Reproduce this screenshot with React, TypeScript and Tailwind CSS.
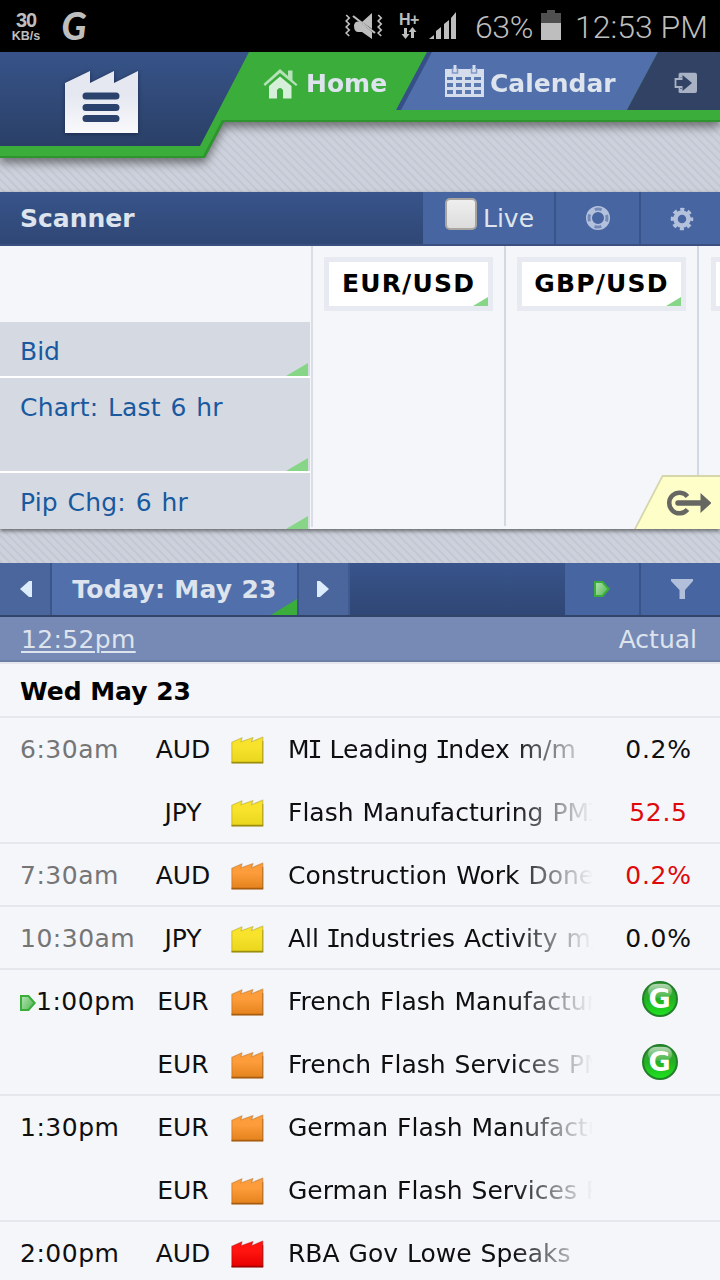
import clsx from 'clsx';

type Impact = 'low' | 'medium' | 'high';

interface CalendarEvent {
  time?: string;
  currency: string;
  impact: Impact;
  title: string;
  actual?: string;
  worse?: boolean;
  graph?: boolean;
  past?: boolean;
  next?: boolean;
  last?: boolean;
}

const EVENTS: CalendarEvent[] = [
  { time: '6:30am', currency: 'AUD', impact: 'low', title: 'MI Leading Index m/m', actual: '0.2%', past: true },
  { currency: 'JPY', impact: 'low', title: 'Flash Manufacturing PMI', actual: '52.5', worse: true, last: true },
  { time: '7:30am', currency: 'AUD', impact: 'medium', title: 'Construction Work Done', actual: '0.2%', worse: true, past: true, last: true },
  { time: '10:30am', currency: 'JPY', impact: 'low', title: 'All Industries Activity m/m', actual: '0.0%', past: true, last: true },
  { time: '1:00pm', currency: 'EUR', impact: 'medium', title: 'French Flash Manufacturing PMI', graph: true, next: true },
  { currency: 'EUR', impact: 'medium', title: 'French Flash Services PMI', graph: true, last: true },
  { time: '1:30pm', currency: 'EUR', impact: 'medium', title: 'German Flash Manufacturing PMI' },
  { currency: 'EUR', impact: 'medium', title: 'German Flash Services PMI', last: true },
  { time: '2:00pm', currency: 'AUD', impact: 'high', title: 'RBA Gov Lowe Speaks' },
];

const IMPACT_COLORS: Record<Impact, [string, string, string]> = {
  low: ['#f8e22c', '#e9d61c', '#9c8e0c'],
  medium: ['#fc9c3a', '#e4831c', '#a85c10'],
  high: ['#ff1410', '#e60000', '#a00000'],
};

function ImpactIcon({ impact }: { impact: Impact }) {
  const [top, bottom, edge] = IMPACT_COLORS[impact];
  return (
    <svg width="33" height="28" viewBox="0 0 33 28">
      <defs>
        <linearGradient id={`impact-${impact}`} x1="0" y1="0" x2="0" y2="1">
          <stop offset="0.4" stopColor={top} />
          <stop offset="1" stopColor={bottom} />
        </linearGradient>
      </defs>
      <path
        d="M.8 6.200 11 1.800l-1 4L22 1.500l-1.500 4.300L31.800 1v25.600H.8z"
        fill={`url(#impact-${impact})`}
        stroke={edge}
        strokeOpacity="0.4"
        strokeWidth="1.2"
        strokeLinejoin="round"
      />
      <path d="M.5 26.600h31.800" stroke={edge} strokeWidth="1.8" />
      <path d="M31.800 5v21" stroke={edge} strokeWidth="1.2" strokeOpacity="0.6" />
    </svg>
  );
}

function GraphIcon() {
  return (
    <div className="relative ml-[3px] -mt-[5px] w-9 h-9 rounded-full border-2 border-[#23802a] bg-linear-to-b from-[#3f9a3f] via-[#22b022] to-[#1fe01f] flex items-center justify-center">
      <div className="absolute top-px w-6 h-3.5 rounded-full bg-linear-to-b from-white/60 to-white/10" />
      <span className="relative text-white font-bold text-[27px] leading-none -mt-px">G</span>
    </div>
  );
}

function NextMarker({ className }: { className?: string }) {
  return (
    <svg width="16" height="16" viewBox="0 0 16 16" className={clsx('shrink-0', className)}>
      <defs>
        <linearGradient id="next-fill" x1="0" y1="0" x2="1" y2="0.6">
          <stop offset="0" stopColor="#b4e4b4" />
          <stop offset="1" stopColor="#5cbc5c" />
        </linearGradient>
      </defs>
      <path d="M1 1h7.500l6.200 7-6.200 7H1z" fill="url(#next-fill)" stroke="#3aad3a" strokeWidth="2" />
    </svg>
  );
}

function Corner({ className }: { className?: string }) {
  return <div className={clsx('absolute [clip-path:polygon(100%_0,100%_100%,0_100%)]', className)} />;
}

// Capital I takes the monospaced cut, which has the crossbars
function Title({ text }: { text: string }) {
  return text.split(/(I)/).map((part, i) =>
    part === 'I' ? (
      <span key={i} className="font-['DejaVu_Sans_Mono',monospace] -mx-[2px]">
        I
      </span>
    ) : (
      part
    ),
  );
}

function StatusBar() {
  return (
    <div className="h-[52px] bg-black text-[#bebebe] flex items-center">
      <div className="w-10 ml-1.5 mt-0.5 flex flex-col items-center font-['Liberation_Sans',sans-serif]">
        <span className="text-[20px] leading-[18px] font-bold tracking-[-1px]">30</span>
        <span className="text-[12.500px] leading-[14px] font-bold">KB/s</span>
      </div>
      <span className="ml-3.5 w-7 text-center font-['Lato',sans-serif] font-black italic text-[37px] leading-none -mt-0.5">G</span>
      <svg width="38" height="30" viewBox="0 0 38 30" className="ml-[257px]" fill="#bebebe">
        <path d="M1.200 4l3 3-3 3 3 3-3 3 3 3-3 3 3 3M33.200 4l3 3-3 3 3 3-3 3 3 3-3 3 3 3" fill="none" stroke="#bebebe" strokeWidth="1.7" />
        <path d="M17 11 27 2v16zM9 14c1-4 4-4 6-3l12 10v7l-10-7h-4c-3 0-4-3-4-7z" />
        <path d="M8 5l22 17" stroke="#bebebe" strokeWidth="2.2" />
      </svg>
      <div className="ml-[15px] w-[22px] flex flex-col items-center">
        <span className="font-['Liberation_Sans',sans-serif] font-bold text-[16px] leading-[14px] tracking-[-0.5px]">H+</span>
        <svg width="16" height="12" viewBox="0 0 16 12" fill="#bebebe">
          <path d="M3 1h3v6h2.500l-4 5-4-5H3zM10 11h3V5h2.500l-4-5-4 5H10z" />
        </svg>
      </div>
      <svg width="28" height="28" viewBox="0 0 28 28" fill="#bebebe" className="ml-[9px]">
        <path d="M0 27l5-4v4zM7 27v-8l5-4v12zM15 27V12l5-4v19zM22 27V6l5-6v27z" />
      </svg>
      <span className="ml-[18px] w-[61px] pt-0.5 font-['Roboto',sans-serif] font-light text-[32px] whitespace-nowrap tracking-[-0.4px]">63%</span>
      <svg width="20" height="30" viewBox="0 0 20 30" className="ml-[5px] -mt-[2px]">
        <path d="M6 0h8v3h6v10H0V3h6z" fill="#505050" />
        <path d="M0 13h20v17H0z" fill="#bebebe" />
      </svg>
      <span className="ml-[14px] pt-0.5 font-['Roboto',sans-serif] font-light text-[32px] whitespace-nowrap">12:53 PM</span>
    </div>
  );
}

function Header() {
  return (
    <header className="h-[140px] drop-shadow-[0_5px_5px_rgba(60,60,60,0.65)]">
      <div className="h-[106px] bg-[#2e942e] [clip-path:polygon(0_0,100%_0,100%_70px,224px_70px,205px_106px,0_106px)]">
        <div className="h-[106px] bg-[#3aad3a] flex items-start [clip-path:polygon(0_0,100%_0,100%_68px,222px_68px,203px_104px,0_104px)]">
          <div className="w-[249px] h-[94px] shrink-0 bg-linear-to-b from-[#375389] to-[#2a4067] [clip-path:polygon(0_0,100%_0,200px_100%,0_100%)]">
            <svg width="80" height="68" viewBox="0 0 80 68" className="ml-[62px] mt-[17px] drop-shadow-[0_1px_2px_rgba(20,30,60,0.7)]">
              <defs>
                <linearGradient id="logo-fill" x1="0" y1="0" x2="0" y2="1">
                  <stop offset="0.4" stopColor="#e6e8f1" />
                  <stop offset="1" stopColor="#fafafc" />
                </linearGradient>
              </defs>
              <path d="M3 14 28 2v12L52 2v12L76 2v62H3z" fill="url(#logo-fill)" />
              <path d="M24 27h30M24 38.500h30M24 49.500h30" stroke="#2b426d" strokeWidth="7" strokeLinecap="round" />
            </svg>
          </div>
          <div className="w-[147px] h-[63px] pl-[14px] pt-px shrink-0 flex items-center font-bold text-[#dde4ee]">
            <svg width="36" height="32" viewBox="0 0 36 32" fill="#d6efd8" className="shrink-0">
              <path d="M.500 16 17 1l8 7V2.500h4.500V12l5 4.500-1.500 1.500L17 5 2 18z" opacity="0.8" />
              <path d="M6 18 17 8.500 28.500 18v12.500H20V22q-3-4-6 0v8.500H6z" />
            </svg>
            <span className="ml-[7px] text-[25px]">Home</span>
          </div>
          <div className="w-[262px] h-[58px] shrink-0 bg-[#364f88] [clip-path:polygon(31px_0,100%_0,231px_100%,0_100%)]">
            <div className="w-full h-full bg-[#5170ab] flex items-center pl-[49px] pt-[5px] font-bold text-[#dde4ee] [clip-path:polygon(36px_0,100%_0,231px_100%,5px_100%)]">
              <svg width="39" height="33" viewBox="0 0 39 33" className="shrink-0 -mt-1">
                <path d="M0 4h39v28H0z" fill="#d5ddec" />
                <path d="M10 0v6M29 0v6" stroke="#d5ddec" strokeWidth="3" />
                <path d="M7.500 3v5h5V3M26.500 3v5h5V3" stroke="#8198c4" strokeWidth="1.500" fill="none" />
                <path
                  d="M2 12h6v3H2zM11 12h6v3h-6zM20 12h6v3h-6zM29 12h7v3h-7zM2 18h6v4H2zM11 18h6v4h-6zM20 18h6v4h-6zM29 18h7v4h-7zM2 25h6v4H2zM11 25h6v4h-6zM20 25h6v4h-6zM29 25h7v4h-7z"
                  fill="#5b78b0"
                />
              </svg>
              <span className="ml-[6px] text-[25px]">Calendar</span>
            </div>
          </div>
          <div className="-ml-[31px] w-[93px] h-[58px] shrink-0 bg-[#314265] flex items-center justify-center pl-[25px] pt-[3px] [clip-path:polygon(31px_0,100%_0,100%_100%,0_100%)]">
            <svg width="24" height="22" viewBox="0 0 24 22">
              <path d="M5.500.800H21q2 0 2 2V19q0 2-2 2H5.500v-4H10l8-6-8-6v.500H5.500z" fill="#a9b2c4" />
              <path d="M5.500 6V1.500M5.500 16v4.500M1.500 7h7V3.500l9 7.500-9 7.500V15h-7z" fill="#314265" stroke="#a9b2c4" strokeWidth="1.800" />
              <path d="M8.500 3 18 11l-9.500 8z" fill="#314265" />
            </svg>
          </div>
        </div>
      </div>
    </header>
  );
}

function PairColumn({ pair }: { pair: string }) {
  return (
    <div className="w-[193px] h-[280px] shrink-0 border-r-2 border-[#d3d9e2] pt-[11px] pl-[11px]">
      <div className="relative w-[169px] h-[54px] border-[5px] border-[#e8eaf1] bg-white flex items-center justify-center font-bold text-black text-[25px] tracking-[1.200px]">
        {pair}
        <Corner className="right-0 bottom-0 w-[15px] h-[9px] bg-[#87d687]" />
      </div>
    </div>
  );
}

function Scanner() {
  return (
    <section className="bg-[#f4f6fa] shadow-[0_2px_4px_rgba(60,60,60,0.7)]">
      <div className="h-[54px] border-b-2 border-[#3b5080] bg-linear-to-b from-[#38548b] to-[#2f4775] flex items-stretch text-[#dde4ee] text-[25px]">
        <div className="w-[423px] pl-5 pt-0.5 flex items-center font-bold">Scanner</div>
        <div className="w-[133px] border-r-2 border-[#38548b] bg-[#4765a0] flex items-center">
          <div className="ml-[22px] -mt-2 w-8 h-8 rounded-[5px] border-2 border-[#a9a6a2] bg-linear-to-b from-[#efefef] to-[#dcdcdc]" />
          <span className="ml-[6px] pt-0.5">Live</span>
        </div>
        <div className="w-[85px] border-r-2 border-[#38548b] bg-[#4765a0] flex items-center justify-center">
          <svg width="26" height="26" viewBox="0 0 26 26" fill="none">
            <circle cx="13" cy="13" r="9" stroke="#b4c1dc" strokeWidth="6" />
            <circle cx="13" cy="13" r="9" stroke="#7389b8" strokeWidth="3" strokeDasharray="7 7.140" strokeDashoffset="3.500" />
          </svg>
        </div>
        <div className="flex-1 bg-[#4765a0] flex items-center justify-center pl-0.5 pt-0.5">
          <svg width="24" height="24" viewBox="0 0 24 24" fill="none" stroke="#b4c1dc">
            <circle cx="12" cy="12" r="6.500" strokeWidth="4.500" />
            <circle cx="12" cy="12" r="9.500" strokeWidth="3.500" strokeDasharray="4 3.460" strokeDashoffset="2" />
          </svg>
        </div>
      </div>
      <div className="relative h-[283px] flex overflow-hidden">
        <div className="w-[313px] shrink-0 flex text-[25px] text-[#18599f]">
          <div className="w-[310px] pt-[76px]">
            <div className="relative h-[56px] w-[310px] bg-[#d5d9e2] border-b-2 border-white pl-5 pt-[15px] leading-[30px]">
              Bid
              <Corner className="right-[2px] bottom-0 w-[22px] h-[13px] bg-[#87d687]" />
            </div>
            <div className="relative h-[95px] w-[310px] bg-[#d5d9e2] border-b-2 border-white pl-5 pt-[15px] leading-[30px] tracking-[0.200px] [word-spacing:1.500px]">
              Chart: Last 6 hr
              <Corner className="right-[2px] bottom-0 w-[22px] h-[13px] bg-[#87d687]" />
            </div>
            <div className="relative h-[56px] w-[310px] bg-[#d5d9e2] pl-5 pt-[15px] leading-[30px] tracking-[0.200px] [word-spacing:1.500px]">
              Pip Chg: 6 hr
              <Corner className="right-[2px] bottom-0 w-[22px] h-[13px] bg-[#87d687]" />
            </div>
          </div>
          <div className="w-[3px] h-[281px] border-r-2 border-[#dadde6]" />
        </div>
        <PairColumn pair="EUR/USD" />
        <PairColumn pair="GBP/USD" />
        <div className="w-[193px] shrink-0 pt-[11px] pl-[12px]">
          <div className="w-[169px] h-[54px] border-[5px] border-[#e8eaf1] bg-white" />
        </div>
        <div className="absolute right-0 bottom-0 w-[86px] h-[54px] bg-[#d6d6ac] [clip-path:polygon(28px_0,100%_0,100%_100%,0_100%)]">
          <div className="w-full h-full bg-[#fefec8] flex items-center pl-[31px] pt-0.5 [clip-path:polygon(29px_2px,100%_2px,100%_100%,2px_100%)]">
            <svg width="46" height="26" viewBox="0 0 46 26" fill="none" stroke="#666662">
              <path d="M22.500 6.500A10.300 10.300 0 1 0 22.500 19.500" strokeWidth="4.500" />
              <path d="M13 13h23" strokeWidth="5.500" strokeLinecap="round" />
              <path d="M35.500 3v20l11-10z" fill="#666662" stroke="none" />
            </svg>
          </div>
        </div>
      </div>
    </section>
  );
}

function EventRow({ event }: { event: CalendarEvent }) {
  return (
    <div
      className={clsx(
        'h-[63px] shrink-0 flex items-center text-[25px] text-[#0f0f0f] whitespace-nowrap',
        event.last && 'shadow-[inset_0_-2px_0_#e5e7ec]',
      )}
    >
      <div className={clsx('w-[147px] pl-5 flex items-center tracking-[0.500px]', event.past && 'text-[#757575]')}>
        {event.next && <NextMarker className="mt-[3px]" />}
        {event.time}
      </div>
      <div className="w-[72px] text-center">{event.currency}</div>
      <div className="w-[69px] pl-3">
        <ImpactIcon impact={event.impact} />
      </div>
      <div className="w-[305px] overflow-hidden [word-spacing:1px] [mask-image:linear-gradient(to_right,#000_225px,transparent_305px)]">
        <Title text={event.title} />
      </div>
      <div className={clsx('flex-1 pl-1 flex justify-center tracking-[0.700px]', event.worse && 'text-[#de0a0a]')}>
        {event.graph ? <GraphIcon /> : event.actual}
      </div>
    </div>
  );
}

function Calendar() {
  return (
    <section className="mt-[34px] bg-[#f4f6fa] flex flex-col">
      <div className="h-[54px] border-b-2 border-[#324468] bg-linear-to-b from-[#38548b] to-[#2f4775] flex items-stretch justify-between">
        <div className="flex items-stretch">
          <div className="w-[52px] pl-[2px] border-r-2 border-[#3b568c] bg-[#4a669c] flex items-center justify-center">
            <svg width="12" height="16" viewBox="0 0 12 16">
              <path d="M12 0v16H9L0 8l9-8z" fill="#dcecfb" />
            </svg>
          </div>
          <div className="relative w-[247px] border-r-2 border-[#3b568c] bg-[#5170ab] pt-0.5 flex items-center justify-center font-bold text-[25px] text-[#dde4ee] tracking-[0.300px]">
            Today: May 23
            <Corner className="right-0 bottom-0 w-[26px] h-[16px] bg-[#3aad3a]" />
          </div>
          <div className="w-[51px] pr-px border-r-2 border-[#3f5b92] bg-[#4a669c] flex items-center justify-center">
            <svg width="12" height="16" viewBox="0 0 12 16">
              <path d="M0 0v16h3l9-8-9-8z" fill="#dcecfb" />
            </svg>
          </div>
        </div>
        <div className="flex items-stretch">
          <div className="w-[76px] border-r-2 border-[#38548b] bg-[#4765a0] flex items-center justify-center">
            <NextMarker />
          </div>
          <div className="w-[79px] bg-[#4765a0] flex items-center justify-center pl-[3px] pb-px">
            <svg width="24" height="22" viewBox="0 0 24 22">
              <path d="M1 1h22v2l-8 9v9H9.500v-9L1 3z" fill="#b1bfdb" />
            </svg>
          </div>
        </div>
      </div>
      <div className="h-[45px] border-b-2 border-[#6b7fa6] bg-[#768ab5] pl-[21px] pr-[23px] pt-0.5 flex items-center justify-between text-[25px] text-[#dde4ee]">
        <span className="underline underline-offset-[3px] decoration-2 tracking-[0.350px]">12:52pm</span>
        <span>Actual</span>
      </div>
      <div className="h-[56px] pl-5 pt-[3px] flex items-center font-bold text-[25px] text-black shadow-[inset_0_-2px_0_#e5e7ec,inset_0_2px_0_#e5e7ec]">
        Wed May 23
      </div>
      {EVENTS.map((event, i) => (
        <EventRow key={i} event={event} />
      ))}
    </section>
  );
}

export default function App() {
  return (
    <div className="w-[720px] h-[1280px] overflow-hidden bg-[#c9ceda] bg-[repeating-linear-gradient(45deg,#ccd1dd_0px,#ccd1dd_3px,#c3c8d0_4px,#c3c8d0_5px,#ccd1dd_6px)] font-['DejaVu_Sans',sans-serif]">
      <StatusBar />
      <Header />
      <Scanner />
      <Calendar />
    </div>
  );
}
